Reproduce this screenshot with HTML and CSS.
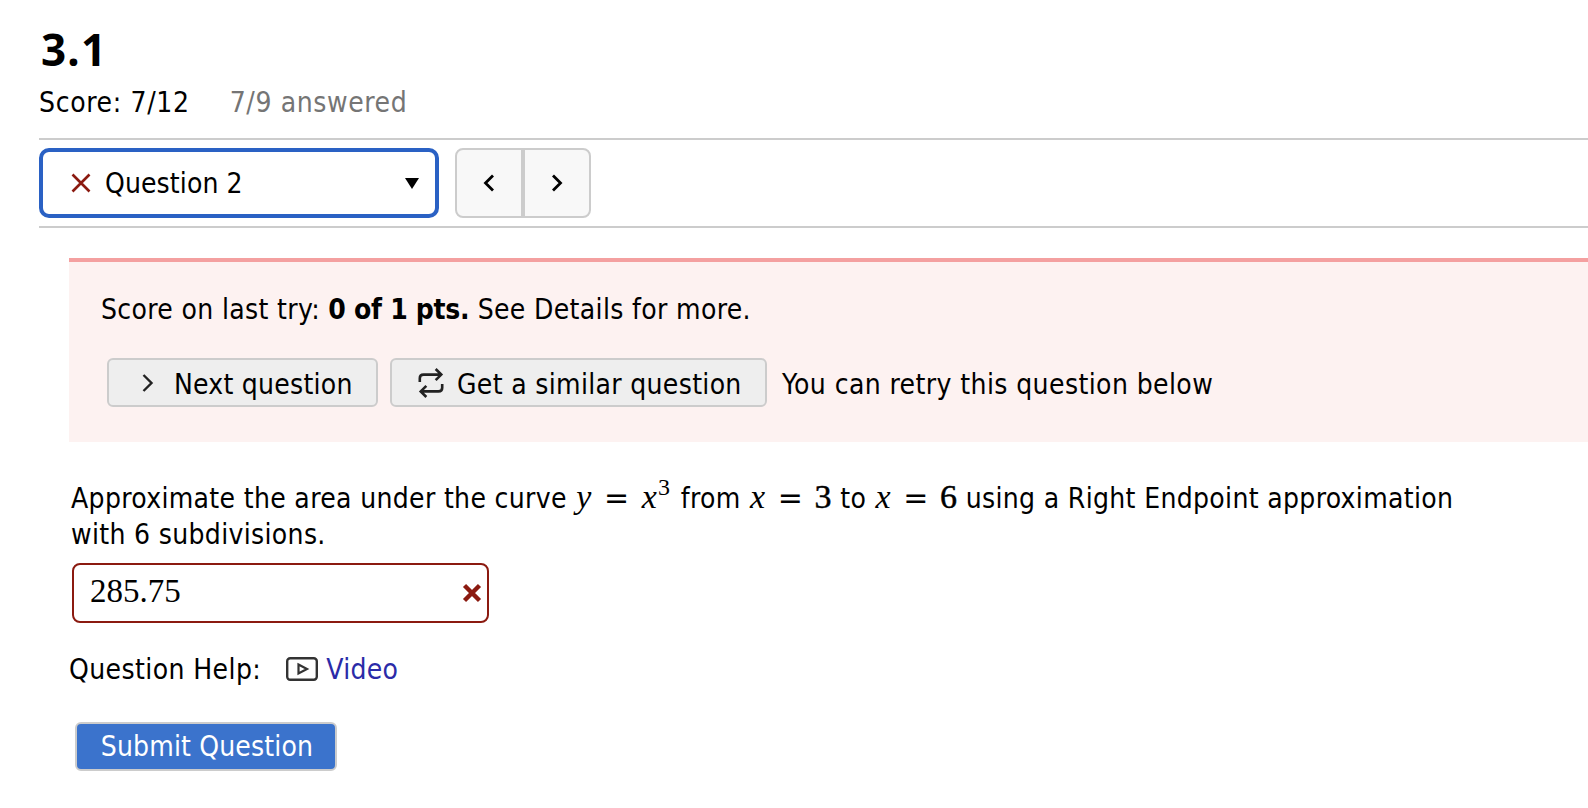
FILE: index.html
```html
<!DOCTYPE html>
<html lang="en">
<head>
<meta charset="utf-8">
<title>3.1</title>
<link rel="stylesheet" href="styles.css">
</head>
<body>
<main class="page">
  <h1 class="title">3.1</h1>
  <div class="score-row"><span>Score: 7/12</span><span class="answered">7/9 answered</span></div>
  <nav class="nav-row">
    <div class="select">
      <svg class="x-icon" viewBox="0 0 20 20" width="20" height="20"><path d="M1.5 1.5L18.5 18.5M18.5 1.5L1.5 18.5" fill="none" stroke="#8b1a10" stroke-width="2.6"/></svg>
      <span class="select-label">Question 2</span>
      <span class="caret"></span>
    </div>
    <div class="pager">
      <button class="pager-btn"><svg viewBox="0 0 12 18" width="12" height="18"><path d="M10 1.5L2.5 9L10 16.5" fill="none" stroke="#000" stroke-width="2.8"/></svg></button>
      <button class="pager-btn"><svg viewBox="0 0 12 18" width="12" height="18"><path d="M2 1.5L9.5 9L2 16.5" fill="none" stroke="#000" stroke-width="2.8"/></svg></button>
    </div>
  </nav>
  <section class="alert">
    <p class="alert-text">Score on last try: <b>0 of 1 pts.</b> See Details for more.</p>
    <div class="actions">
      <button class="btn btn-next"><svg viewBox="0 0 12 18" width="12" height="18"><path d="M1.5 1L9.5 9L1.5 17" fill="none" stroke="#222" stroke-width="2.4"/></svg><span>Next question</span></button>
      <button class="btn btn-similar"><svg viewBox="0 0 30 32" width="28" height="30"><path d="M3 15V11Q3 7 7 7H26M20 1L26 7L20 13M27 17V21Q27 25 23 25H4M10 19L4 25L10 31" fill="none" stroke="#222" stroke-width="2.8"/></svg><span>Get a similar question</span></button>
      <span class="retry">You can retry this question below</span>
    </div>
  </section>
  <p class="question"><span class="q-line">Approximate the area under the curve <i class="m">y</i> <span class="eq">=</span> <i class="m">x</i><sup class="sup">3</sup> from <i class="m">x</i> <span class="eq">=</span> <span class="n">3</span> to <i class="m">x</i> <span class="eq">=</span> <span class="n">6</span> using a Right Endpoint approximation</span> <span class="q-line">with 6 subdivisions.</span></p>
  <div class="answer">
    <span class="answer-value">285.75</span>
    <svg viewBox="0 0 20 20" width="20" height="20"><path d="M2.5 2.5L17.5 17.5M17.5 2.5L2.5 17.5" fill="none" stroke="#8b1a10" stroke-width="4.4"/></svg>
  </div>
  <div class="help">
    <span class="help-label">Question Help:</span>
    <svg class="video-icon" viewBox="0 0 32 24" width="32" height="24"><rect x="1.2" y="1.2" width="29.6" height="21.6" rx="3" fill="none" stroke="#333" stroke-width="2.4"/><path d="M12.5 7.5L21 12L12.5 16.5Z" fill="none" stroke="#333" stroke-width="2.2"/></svg>
    <a class="video-link" href="#">Video</a>
  </div>
  <button class="submit">Submit Question</button>
</main>
</body>
</html>
```

FILE: styles.css
```css
* { box-sizing: border-box; }
html, body { margin: 0; background: #fff; }
body { font-family: "DejaVu Sans Condensed", "DejaVu Sans", sans-serif; font-size: 28px; color: #000; overflow: hidden; }
.page { padding: 24px 0 0 39px; height: 808px; }
.title { margin: 0 0 0 2px; font-family: "Noto Sans", sans-serif; font-size: 44px; line-height: 50px; font-weight: 700; letter-spacing: 1.2px; }
.score-row { display: flex; gap: 40px; margin-top: 11px; line-height: 36px; height: 53px; letter-spacing: .65px; }
.answered { color: #757575; letter-spacing: .6px; }
.nav-row { display: flex; gap: 16px; align-items: center; height: 90px; border-top: 2px solid #ccc; border-bottom: 2px solid #ccc; }
.select { display: flex; align-items: center; width: 400px; height: 70px; border: 4px solid #2a61c4; border-radius: 10px; padding: 0 16px 0 28px; }
.select-label { margin-left: 14px; flex: 1; letter-spacing: .1px; }
.caret { width: 0; height: 0; border-left: 7px solid transparent; border-right: 7px solid transparent; border-top: 11px solid #000; }
.pager { display: flex; height: 70px; }
.pager-btn { width: 68px; height: 70px; background: #f8f8f8; border: 2px solid #ccc; border-radius: 8px 0 0 8px; display: flex; align-items: center; justify-content: center; padding: 0; }
.pager-btn + .pager-btn { border-radius: 0 8px 8px 0; }
.alert { margin: 30px 0 0 30px; height: 184px; background: #fdf2f1; border-top: 4px solid #f4a0a0; padding: 28px 0 0 32px; }
.alert-text { margin: 0; line-height: 40px; letter-spacing: .34px; }
.alert-text b { letter-spacing: -.3px; }
.actions { display: flex; align-items: flex-start; gap: 12px; margin: 28px 0 0 6px; }
.btn { display: flex; align-items: center; height: 49px; font: inherit; color: #000; background: #eee; border: 2px solid #ccc; border-radius: 6px; padding: 0; }
.btn span { position: relative; top: 2px; }
.btn-next { width: 271px; padding-left: 33px; gap: 20px; letter-spacing: .25px; }
.btn-similar { width: 377px; padding-left: 25px; gap: 12px; letter-spacing: .32px; }
.retry { margin-left: 3px; letter-spacing: .4px; line-height: 54px; }
.question { margin: 39px 0 0 32px; line-height: 36px; letter-spacing: .33px; white-space: nowrap; }
.q-line { display: block; height: 36px; }
.m, .n { font-family: "Liberation Serif", serif; font-size: 34px; line-height: 0; }
.m { margin: 0 1px; }
.n { -webkit-text-stroke: .5px #000; }
.eq { font-family: "DejaVu Sans", sans-serif; font-size: 30px; line-height: 0; margin: 0 3px; }
.sup { font-family: "Liberation Serif", serif; font-size: 24px; line-height: 0; margin-right: 2px; position: relative; top: -3px; }
.answer { display: flex; align-items: center; justify-content: space-between; width: 417px; height: 60px; margin: 10px 0 0 33px; border: 2px solid #8b1a10; border-radius: 8px; padding: 0 5px 0 16px; }
.answer-value { font-family: "Liberation Serif", serif; font-size: 33px; padding-bottom: 3px; }
.help { display: flex; align-items: center; margin: 27px 0 0 30px; line-height: 40px; }
.help-label { letter-spacing: .4px; }
.video-icon { margin-left: 25px; position: relative; top: -1px; }
.video-link { margin-left: 8px; color: #2b2ba8; text-decoration: none; letter-spacing: .3px; }
.submit { display: block; margin: 32px 0 0 36px; width: 262px; height: 49px; font: inherit; letter-spacing: .15px; color: #fff; background: #3b73cc; border: 2px solid #ccc; border-radius: 6px; padding: 0 0 0 2px; }
```
